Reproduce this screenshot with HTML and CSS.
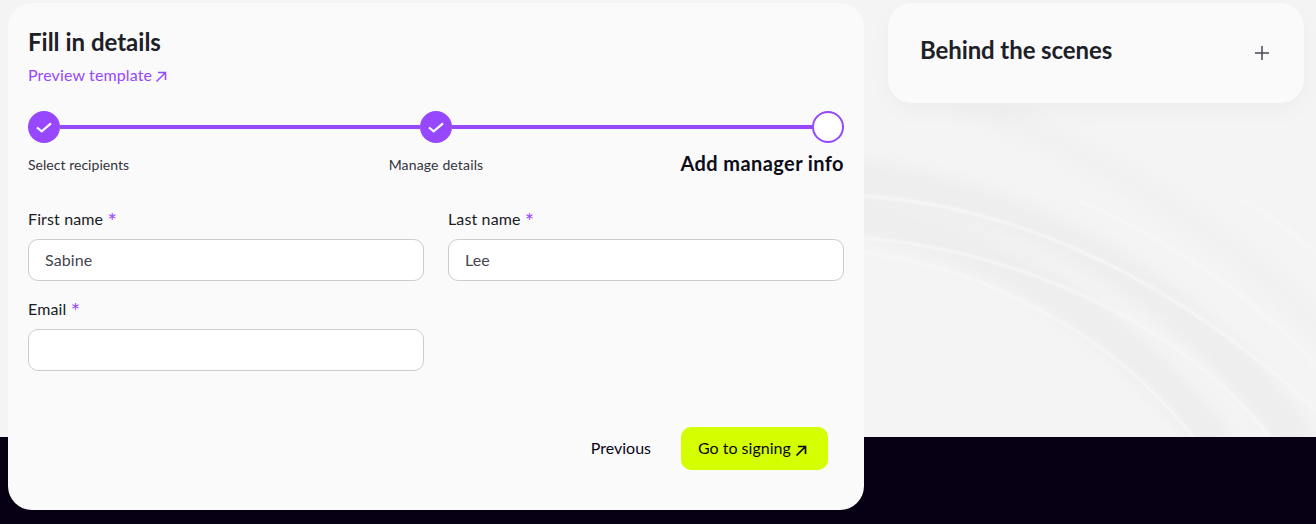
FILE: index.html
```html
<!DOCTYPE html>
<html lang="en">
<head>
<meta charset="utf-8">
<title>Fill in details</title>
<link rel="stylesheet" href="styles.css">
</head>
<body>
<svg class="backdrop" width="1316" height="437" viewBox="0 0 1316 437" aria-hidden="true">
  <defs>
    <filter id="soft" x="-10%" y="-10%" width="120%" height="120%"><feGaussianBlur stdDeviation="8"/></filter>
    <filter id="softer" x="-10%" y="-10%" width="120%" height="120%"><feGaussianBlur stdDeviation="1.2"/></filter>
  </defs>
  <g filter="url(#soft)" fill="none" stroke="#eeeeee" stroke-width="38">
    <path d="M820 212 C990 232 1120 320 1218 445"/>
    <path d="M820 172 C1040 195 1200 300 1300 445"/>
  </g>
  <g filter="url(#soft)" fill="none" stroke="#f1f1f1" stroke-width="30">
    <path d="M960 100 C1120 160 1260 260 1330 340"/>
  </g>
  <g filter="url(#softer)" fill="none" stroke="#f7f7f7" stroke-width="2.5">
    <path d="M864 252 C980 268 1110 330 1193 437"/>
    <path d="M864 238 C1000 250 1170 310 1270 437"/>
    <path d="M864 196 C1000 205 1160 265 1316 410"/>
    <path d="M1077 200 C1170 240 1260 300 1316 367"/>
    <path d="M1243 200 C1270 215 1295 235 1316 253"/>
  </g>
</svg>
<main class="page">
  <section class="card form-card">
    <h1 class="title">Fill in details</h1>
    <a class="preview" href="#">Preview template
      <svg class="arrow" width="12" height="12" viewBox="0 0 12 12"><path d="M1.5 10.5 10.5 1.5M3 1.5h7.5V9" fill="none" stroke="currentColor" stroke-width="1.5"/></svg>
    </a>
    <div class="track">
      <span class="dot done"><svg width="16" height="16" viewBox="0 0 16 16"><path d="M1 8.5 5.7 12.3 15 4.3" fill="none" stroke="#fff" stroke-width="2.2"/></svg></span>
      <span class="link"></span>
      <span class="dot done"><svg width="16" height="16" viewBox="0 0 16 16"><path d="M1 8.5 5.7 12.3 15 4.3" fill="none" stroke="#fff" stroke-width="2.2"/></svg></span>
      <span class="link"></span>
      <span class="dot current"></span>
    </div>
    <div class="step-labels">
      <span class="step-label first">Select recipients</span>
      <span class="step-label">Manage details</span>
      <span class="step-label active">Add manager info</span>
    </div>
    <form class="fields">
      <label class="field">
        <span class="field-label">First name <em class="req">*</em></span>
        <input class="input" type="text" value="Sabine">
      </label>
      <label class="field">
        <span class="field-label">Last name <em class="req">*</em></span>
        <input class="input" type="text" value="Lee">
      </label>
      <label class="field">
        <span class="field-label">Email <em class="req">*</em></span>
        <input class="input" type="text">
      </label>
    </form>
    <div class="actions">
      <button class="btn ghost" type="button">Previous</button>
      <button class="btn primary" type="button">Go to signing
        <svg class="arrow" width="12" height="12" viewBox="0 0 12 12"><path d="M1.5 10.5 10.5 1.5M3 1.5h7.5V9" fill="none" stroke="currentColor" stroke-width="1.7"/></svg>
      </button>
    </div>
  </section>
  <aside class="card side-card">
    <h2 class="side-title">Behind the scenes</h2>
    <svg class="plus" width="14" height="14" viewBox="0 0 14 14"><path d="M7 0v14M0 7h14" stroke="#4a4a55" stroke-width="1.5" fill="none"/></svg>
  </aside>
</main>
</body>
</html>
```
FILE: styles.css
```css
* { box-sizing: border-box; }
html, body { margin: 0; height: 524px; overflow: hidden; }
body {
  position: relative;
  background: linear-gradient(#f4f4f4 0 437px, #070014 437px);
  font-family: "Lato", "Noto Sans", sans-serif;
  color: #1b1b26;
}
.backdrop { position: absolute; left: 0; top: 0; }
.page {
  position: relative;
  display: flex;
  align-items: flex-start;
  gap: 24px;
  padding: 3px 12px 14px 8px;
}
.card { background: #fafafa; border-radius: 24px; }
.form-card { width: 856px; height: 507px; padding: 25px 20px 40px; display: flex; flex-direction: column; }
.side-card {
  width: 416px; height: 100px; padding: 32px 35px 0 32px;
  display: flex; justify-content: space-between; align-items: flex-start;
  box-shadow: 0 8px 24px rgba(0,0,0,.03);
}
.title { margin: 0; font-size: 24px; line-height: 28px; font-weight: 700; color: #1d2026; }
.side-title { margin: 0; font-size: 24px; line-height: 30px; font-weight: 700; letter-spacing: -.1px; color: #1d2026; }
.plus { margin-top: 11px; }
.preview {
  margin-top: 9px; display: flex; align-items: center; gap: 3px;
  font-size: 16px; line-height: 20px; letter-spacing: .13px; color: #9747ff; text-decoration: none;
}
.preview .arrow { margin-top: 3px; }
.track { display: flex; align-items: center; margin-top: 26px; height: 32px; }
.dot { flex: none; width: 32px; height: 32px; border-radius: 50%; display: flex; align-items: center; justify-content: center; }
.done { background: #9747ff; }
.current { border: 2px solid #9747ff; background: #fff; }
.link { flex: 1; height: 4px; background: #9747ff; }
.step-labels { display: grid; grid-template-columns: 1fr auto 1fr; align-items: start; margin-top: 8px; height: 24px; }
.step-label { margin-top: 5px; font-size: 14px; line-height: 18px; letter-spacing: .15px; color: #33333d; }
.step-label.first { letter-spacing: .03px; }
.step-label.active { margin-top: 0; justify-self: end; font-size: 20px; line-height: 24px; font-weight: 700; letter-spacing: .4px; color: #0d0d1a; }
.fields { display: grid; grid-template-columns: 1fr 1fr; column-gap: 24px; row-gap: 16px; margin-top: 32px; }
.field { display: flex; flex-direction: column; gap: 9px; }
.field-label { font-size: 16px; line-height: 23px; height: 23px; letter-spacing: .13px; color: #1b1b26; }
.req { font-style: normal; font-size: 22px; line-height: 0; vertical-align: -4px; color: #9747ff; }
.input {
  width: 100%; height: 42px; padding: 0 16px 2px;
  border: 1px solid #cccccc; border-radius: 10px; background: #fff;
  font: 16px "Lato", sans-serif; letter-spacing: .1px; color: #45454f; outline: none;
}
.actions { display: flex; justify-content: flex-end; align-items: center; gap: 30px; margin-top: 56px; padding-right: 16px; }
.btn { border: 0; font: 16px "Lato", sans-serif; color: #0b0616; display: flex; align-items: center; gap: 4px; padding: 0 0 2px; background: none; }
.primary { height: 43px; width: 147px; padding-left: 17px; background: #d4ff00; border-radius: 10px; }
.primary .arrow { margin-top: 6px; }
```
